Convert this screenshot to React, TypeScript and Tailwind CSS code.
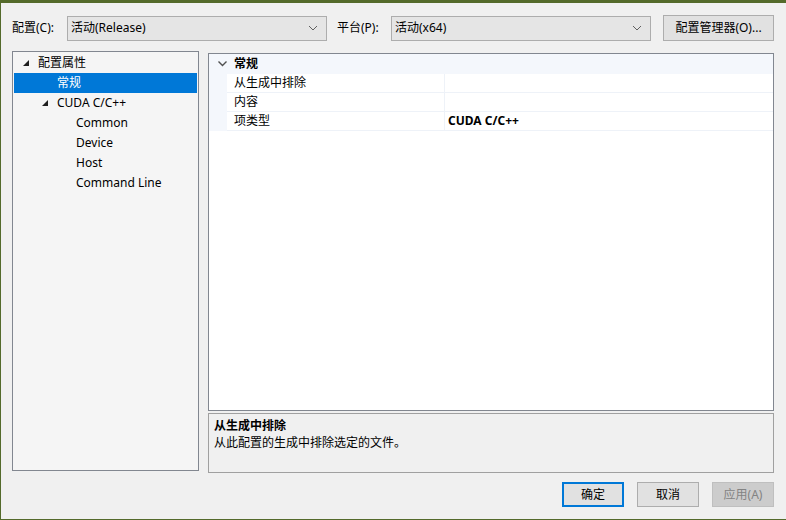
import React from "react";

const font = { fontFamily: '"Noto Sans", "Noto Sans CJK SC", sans-serif' };

function Chevron() {
  return (
    <svg width="10" height="6" viewBox="0 0 10 6" className="shrink-0">
      <path d="M1 1 L5 5 L9 1" fill="none" stroke="#606060" strokeWidth="1" />
    </svg>
  );
}

function Combo({ value }: { value: string }) {
  return (
    <div className="flex h-[25px] w-[260px] items-center justify-between border border-[#adadad] bg-[#e5e5e5] pl-[3px] pr-[8px] text-[12px] text-black">
      <span>{value}</span>
      <Chevron />
    </div>
  );
}

function Tri({ size = 6 }: { size?: number }) {
  return (
    <svg width={size} height={size} viewBox="0 0 6 6" className="shrink-0">
      <path d="M6 0 L6 6 L0 6 Z" fill="#1e1e1e" />
    </svg>
  );
}

type TreeRow = { label: string; indent: number; tri?: boolean; selected?: boolean };

const tree: TreeRow[] = [
  { label: "配置属性", indent: 0, tri: true },
  { label: "常规", indent: 1, selected: true },
  { label: "CUDA C/C++", indent: 1, tri: true },
  { label: "Common", indent: 2 },
  { label: "Device", indent: 2 },
  { label: "Host", indent: 2 },
  { label: "Command Line", indent: 2 },
];

const props = [
  { name: "从生成中排除", value: "" },
  { name: "内容", value: "" },
  { name: "项类型", value: "CUDA C/C++" },
];

export default function App() {
  return (
    <div
      className="flex h-[520px] w-[786px] flex-col border-b border-l border-t-[3px] border-[#546a2b] bg-[#f0f0f0] text-[12px] text-black"
      style={font}
    >
      {/* configuration / platform selectors */}
      <div className="mt-[12px] flex h-[26px] items-center pl-[11px]">
        <span className="w-[55px]">配置(C):</span>
        <Combo value="活动(Release)" />
        <span className="ml-[10px] w-[54px]">平台(P):</span>
        <Combo value="活动(x64)" />
        <button className="ml-[12px] flex h-[26px] w-[111px] items-center justify-center border border-[#adadad] bg-[#e1e1e1] text-[12px]">
          配置管理器(O)...
        </button>
      </div>

      <div className="mt-[10px] flex pl-[11px]">
        {/* property page tree */}
        <div className="h-[420px] w-[187px] border border-[#828790] bg-[#f5f5f5] px-px pt-[1px]">
          {tree.map((r) => (
            <div
              key={r.label}
              className={`flex h-[20px] items-center ${r.selected ? "bg-[#0078d7] text-white" : ""}`}
              style={{ paddingLeft: 9 + r.indent * 19 }}
            >
              <span className="flex w-[15px] items-center">{r.tri && <Tri />}</span>
              <span>{r.label}</span>
            </div>
          ))}
        </div>

        <div className="ml-[9px] mt-[2px] flex flex-col">
          {/* property grid */}
          <div className="h-[358px] w-[566px] border border-[#828790] bg-white">
            <div className="flex h-[20px] items-center bg-[#f4f7fc] font-bold">
              <span className="flex w-[25px] justify-center pl-[1px]">
                <svg width="9" height="6" viewBox="0 0 9 6">
                  <path d="M0.5 0.5 L4.5 4.5 L8.5 0.5" fill="none" stroke="#505050" strokeWidth="1.4" />
                </svg>
              </span>
              <span>常规</span>
            </div>
            {props.map((p) => (
              <div key={p.name} className="flex h-[19px]">
                <div className="w-[18px] bg-[#f4f7fc]" />
                <div className="flex w-[218px] items-center border-b border-r border-[#eef2f8] pl-[7px]">
                  {p.name}
                </div>
                <div className="flex flex-1 items-center border-b border-[#eef2f8] pl-[3px] font-bold">
                  {p.value}
                </div>
              </div>
            ))}
          </div>

          {/* description */}
          <div className="mt-[2px] flex h-[60px] w-[566px] flex-col border border-[#a0a0a0] bg-[#f0f0f0] pl-[5px] pt-[3px] leading-[17px]">
            <span className="font-bold">从生成中排除</span>
            <span>从此配置的生成中排除选定的文件。</span>
          </div>
        </div>
      </div>

      {/* dialog buttons */}
      <div className="mt-[9px] flex justify-end gap-[13px] pr-[12px]">
        <button className="flex h-[25px] w-[62px] items-center justify-center border-2 border-[#0078d7] bg-[#e1e1e1]">
          确定
        </button>
        <button className="flex h-[25px] w-[62px] items-center justify-center border border-[#adadad] bg-[#e1e1e1]">
          取消
        </button>
        <button className="flex h-[25px] w-[62px] items-center justify-center border border-[#bfbfbf] bg-[#cccccc] text-[#838383]">
          应用(A)
        </button>
      </div>
    </div>
  );
}
